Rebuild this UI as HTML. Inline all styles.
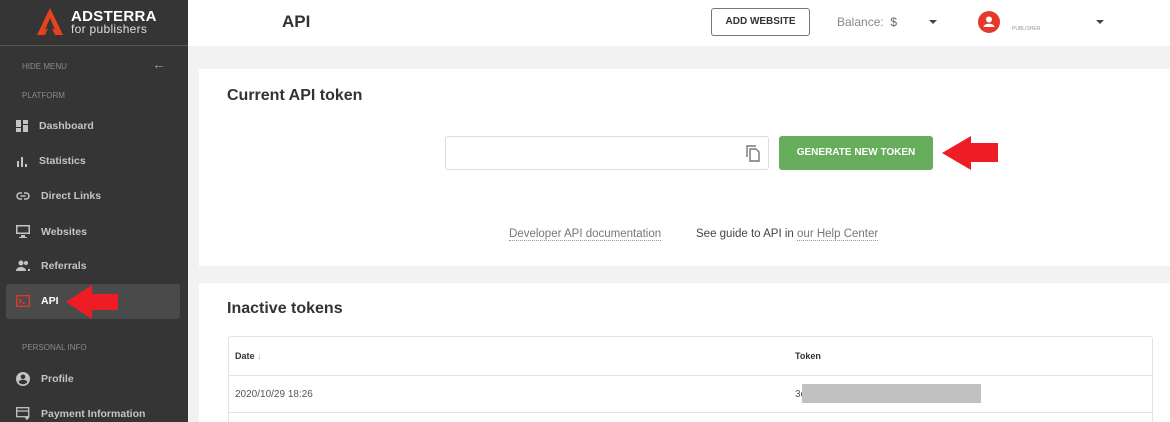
<!DOCTYPE html>
<html><head><meta charset="utf-8"><style>
*{box-sizing:border-box;margin:0;padding:0}
html{width:1170px;height:422px;overflow:hidden}
body{width:1170px;height:422px;overflow:hidden;background:#f2f2f2;font-family:"Liberation Sans",Arial,sans-serif;position:relative}
.sb{position:absolute;left:0;top:0;width:188px;height:422px;background:#353535;color:#bdbdbd}
.logo{height:46px;border-bottom:1px solid #555;position:relative}
.sec{position:absolute;left:22px;font-size:8px;color:#8a8a8a;text-transform:uppercase}
.it{position:absolute;left:16px;font-size:10.5px;font-weight:bold;color:#c4c4c4;display:flex;align-items:center}
.it svg{margin-right:11px}
.hd{position:absolute;left:188px;top:0;right:0;height:46px;background:#fff}
.card{position:absolute;background:#fff;left:199px;right:0;overflow:hidden}
a{color:#777;text-decoration:none;border-bottom:1px dotted #999}
</style></head><body>
<div class="sb">
 <div class="logo">
  <svg style="position:absolute;left:37px;top:8px" width="26" height="27" viewBox="0 0 26 27"><path d="M13 0L26 27H18L13 16 8 27H0Z" fill="#e8421c"/><path d="M13 10L18 22 13 19 8 22Z" fill="#353535"/></svg>
  <div style="position:absolute;left:71px;top:8px;color:#fff;font-weight:bold;font-size:15px;letter-spacing:.3px">ADSTERRA</div>
  <div style="position:absolute;left:71px;top:22px;color:#ddd;font-size:12px;letter-spacing:.3px">for publishers</div>
 </div>
 <div class="sec" style="top:62px">Hide menu</div>
 <div style="position:absolute;left:152px;top:56px;color:#999;font-size:14px">←</div>
 <div class="sec" style="top:91px">Platform</div>
 <div class="it" style="top:120px"><svg width="12" height="12" viewBox="0 0 12 12" fill="#c4c4c4"><rect width="5" height="7"/><rect x="7" width="5" height="4"/><rect y="8" width="5" height="4"/><rect x="7" y="5" width="5" height="7"/></svg>Dashboard</div>
 <div class="it" style="top:155px"><svg width="12" height="12" viewBox="0 0 12 12" fill="#c4c4c4"><rect x="1" y="6" width="2" height="6"/><rect x="5" y="2" width="2" height="10"/><rect x="9" y="9" width="2" height="3"/></svg>Statistics</div>
 <div class="it" style="top:190px"><svg width="14" height="12" viewBox="0 0 14 12" fill="none" stroke="#c4c4c4" stroke-width="1.5"><path d="M6 3H4a3 3 0 000 6h2M8 3h2a3 3 0 010 6H8M4.5 6h5"/></svg>Direct Links</div>
 <div class="it" style="top:225px"><svg width="14" height="13" viewBox="0 0 14 13" fill="#c4c4c4"><path d="M0 0h14v9H0zM1.5 1.5v6h11v-6zM5 10h4v2h2v1H3v-1h2z"/></svg>Websites</div>
 <div class="it" style="top:260px"><svg width="14" height="12" viewBox="0 0 14 12" fill="#c4c4c4"><circle cx="5" cy="3" r="2.5"/><path d="M0 11c0-3 3-4 5-4s5 1 5 4z"/><circle cx="10" cy="3" r="2"/><rect x="12" y="9" width="2" height="2"/></svg>Referrals</div>
 <div style="position:absolute;left:6px;top:284px;width:174px;height:35px;background:#4a4a4a;border-radius:3px"></div>
 <div class="it" style="top:295px;color:#fff"><svg width="14" height="12" viewBox="0 0 14 12" fill="none" stroke="#e53a2a" stroke-width="1.3"><rect x=".7" y=".7" width="12.6" height="10.6"/><path d="M3 4l2 2-2 2M6 8h3"/></svg>API</div>
 <svg style="position:absolute;left:66px;top:284px" width="53" height="36" viewBox="0 0 53 36"><path d="M0 18L26 1V10H52V26H26V35Z" fill="#ee1c25"/></svg>
 <div class="sec" style="top:343px">Personal info</div>
 <div class="it" style="top:372px"><svg width="14" height="14" viewBox="0 0 14 14" fill="#c4c4c4"><path d="M7 0a7 7 0 100 14A7 7 0 007 0zm0 2.5a2.3 2.3 0 110 4.6 2.3 2.3 0 010-4.6zM7 12.3c-1.8 0-3.4-.9-4.3-2.3 0-1.4 2.9-2.2 4.3-2.2s4.3.8 4.3 2.2c-.9 1.4-2.5 2.3-4.3 2.3z"/></svg>Profile</div>
 <div class="it" style="top:407px"><svg width="14" height="13" viewBox="0 0 14 13" fill="none" stroke="#c4c4c4" stroke-width="1.3"><rect x=".7" y=".7" width="12" height="9"/><path d="M1 4h12M11 9v4M9 11h4"/></svg>Payment Information</div>
</div>
<div class="hd">
 <div style="position:absolute;left:94px;top:12px;font-size:17px;font-weight:bold;color:#333">API</div>
 <div style="position:absolute;left:523px;top:8px;width:99px;height:28px;border:1px solid #777;border-radius:3px;font-size:10px;font-weight:bold;color:#333;text-align:center;line-height:26px">ADD WEBSITE</div>
 <div style="position:absolute;left:649px;top:15px;font-size:12px;color:#888">Balance:&nbsp; <span style="color:#666">$</span></div>
 <div style="position:absolute;left:741px;top:20px;border:4px solid transparent;border-top:4px solid #444"></div>
 <div style="position:absolute;left:790px;top:11px;width:22px;height:22px;border-radius:50%;background:#e53a2a"><svg width="22" height="22" viewBox="0 0 22 22" fill="#fff"><circle cx="11" cy="8.5" r="3"/><path d="M5.5 16c0-2.5 3.5-3.3 5.5-3.3s5.5.8 5.5 3.3z"/></svg></div>
 <div style="position:absolute;left:824px;top:26px;font-size:5px;color:#999">PUBLISHER</div>
 <div style="position:absolute;left:908px;top:20px;border:4px solid transparent;border-top:4px solid #444"></div>
</div>
<div class="card" style="top:69px;height:197px">
 <div style="position:absolute;left:28px;top:18px;font-size:16px;font-weight:bold;color:#333">Current API token</div>
 <div style="position:absolute;left:246px;top:67px;width:324px;height:34px;border:1px solid #ddd;border-radius:3px">
  <svg style="position:absolute;left:300px;top:8px" width="15" height="17" viewBox="0 0 15 17" fill="none" stroke="#777" stroke-width="1.4"><path d="M1 12V1h9"/><path d="M4 4h6l3 3v9H4z"/></svg>
 </div>
 <div style="position:absolute;left:580px;top:67px;width:154px;height:34px;background:#66ad5c;border-radius:3px;color:#fff;font-size:10px;font-weight:bold;text-align:center;line-height:34px">GENERATE NEW TOKEN</div>
 <svg style="position:absolute;left:743px;top:66px" width="57" height="36" viewBox="0 0 57 36"><path d="M0 18L29 1V8H56V27H29V35Z" fill="#ee1c25"/></svg>
 <div style="position:absolute;left:310px;top:159px;font-size:11.5px"><a>Developer API documentation</a></div>
 <div style="position:absolute;left:497px;top:159px;font-size:11.5px;color:#444">See guide to API in <a>our Help Center</a></div>
</div>
<div class="card" style="top:283px;height:139px">
 <div style="position:absolute;left:28px;top:17px;font-size:16px;font-weight:bold;color:#333">Inactive tokens</div>
 <div style="position:absolute;left:29px;top:53px;width:925px;height:100px;border:1px solid #e3e3e3;border-radius:3px">
  <div style="position:absolute;left:6px;top:14px;font-size:9px;font-weight:bold;color:#333">Date <span style="color:#aaa;font-weight:normal">↓</span></div>
  <div style="position:absolute;left:566px;top:14px;font-size:9px;font-weight:bold;color:#333">Token</div>
  <div style="position:absolute;left:0;right:0;top:38px;border-top:1px solid #e3e3e3"></div>
  <div style="position:absolute;left:6px;top:52px;font-size:10px;color:#555">2020/10/29 18:26</div>
  <div style="position:absolute;left:566px;top:52px;font-size:10px;color:#555">3e</div>
  <div style="position:absolute;left:573px;top:47px;width:179px;height:19px;background:#c1c1c1"></div>
  <div style="position:absolute;left:0;right:0;top:75px;border-top:1px solid #e3e3e3"></div>
 </div>
</div>
</body></html>
